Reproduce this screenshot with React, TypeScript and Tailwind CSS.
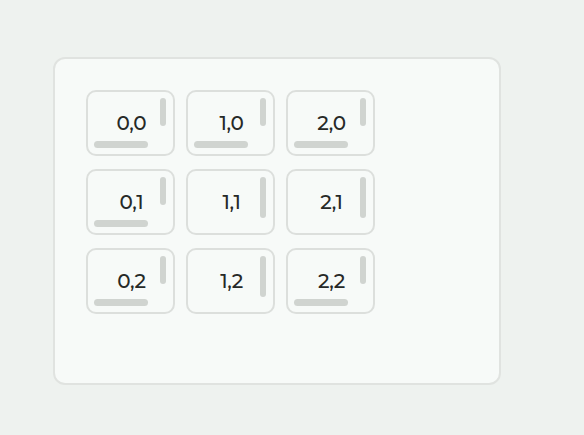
const cells = [
  { label: '0,0', h: true, v: true },
  { label: '1,0', h: true, v: true },
  { label: '2,0', h: true, v: true },
  { label: '0,1', h: true, v: true },
  { label: '1,1', h: false, v: true },
  { label: '2,1', h: false, v: true },
  { label: '0,2', h: true, v: true },
  { label: '1,2', h: false, v: true },
  { label: '2,2', h: true, v: true },
];

function Cell({ label, h, v }: { label: string; h: boolean; v: boolean }) {
  return (
    <div className="relative flex h-[66px] w-[89px] items-center justify-center rounded-[10px] border-2 border-[#dcdfdc] bg-[#f7faf8]">
      <span className="pl-[2px] text-[20px] font-medium leading-none tracking-[-0.3px] text-[#262927]">{label}</span>
      {v && (
        <div
          className={
            h
              ? 'absolute right-[7px] top-[6px] h-[28px] w-[6px] rounded-full bg-[#d0d4d0]'
              : 'absolute right-[7px] top-[6px] h-[41px] w-[6px] rounded-full bg-[#d0d4d0]'
          }
        />
      )}
      {h && <div className="absolute bottom-[6px] left-[6px] h-[7px] w-[54px] rounded-full bg-[#d0d4d0]" />}
    </div>
  );
}

export default function App() {
  return (
    <div className="h-[435px] w-full overflow-hidden bg-[#eef2ef] pl-[53px] pt-[57px]" style={{ fontFamily: '"Montserrat", "Open Sans", "Noto Sans", sans-serif' }}>
      <div className="h-[328px] w-[448px] rounded-[12px] border-2 border-[#e0e3e0] bg-[#f7faf8] pl-[31px] pt-[31px]">
        <div className="grid grid-cols-[repeat(3,89px)] gap-x-[11px] gap-y-[13px]">
          {cells.map((c) => (
            <Cell key={c.label} {...c} />
          ))}
        </div>
      </div>
    </div>
  );
}
